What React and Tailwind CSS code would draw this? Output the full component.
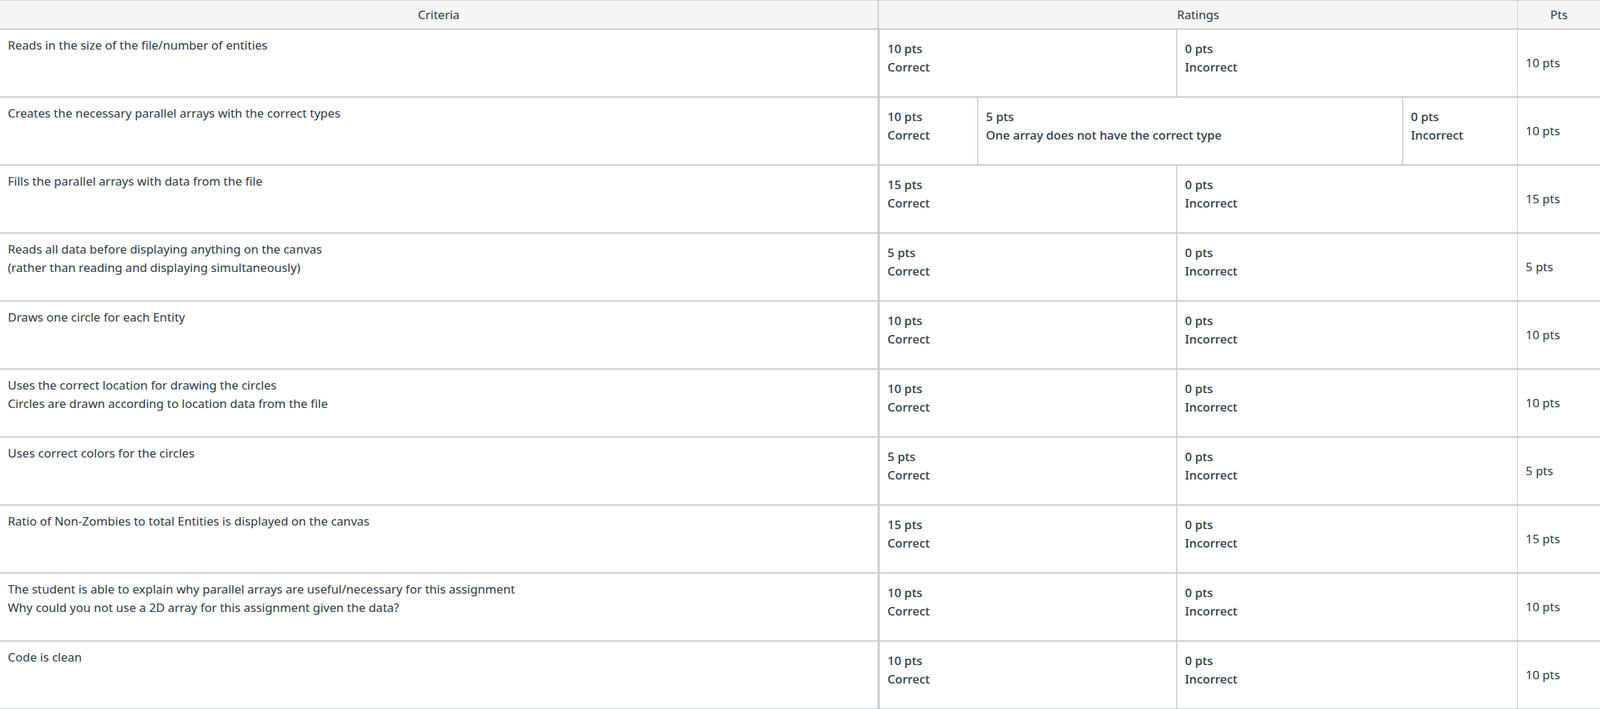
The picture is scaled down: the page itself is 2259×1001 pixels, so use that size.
const rows = [
  { c: ['Reads in the size of the file/number of entities'], r: [[10, 'Correct'], [0, 'Incorrect']], p: 10 },
  { c: ['Creates the necessary parallel arrays with the correct types'], r: [[10, 'Correct'], [5, 'One array does not have the correct type'], [0, 'Incorrect']], p: 10 },
  { c: ['Fills the parallel arrays with data from the file'], r: [[15, 'Correct'], [0, 'Incorrect']], p: 15 },
  { c: ['Reads all data before displaying anything on the canvas', '(rather than reading and displaying simultaneously)'], r: [[5, 'Correct'], [0, 'Incorrect']], p: 5 },
  { c: ['Draws one circle for each Entity'], r: [[10, 'Correct'], [0, 'Incorrect']], p: 10 },
  { c: ['Uses the correct location for drawing the circles', 'Circles are drawn according to location data from the file'], r: [[10, 'Correct'], [0, 'Incorrect']], p: 10 },
  { c: ['Uses correct colors for the circles'], r: [[5, 'Correct'], [0, 'Incorrect']], p: 5 },
  { c: ['Ratio of Non-Zombies to total Entities is displayed on the canvas'], r: [[15, 'Correct'], [0, 'Incorrect']], p: 15 },
  { c: ['The student is able to explain why parallel arrays are useful/necessary for this assignment', 'Why could you not use a 2D array for this assignment given the data?'], r: [[10, 'Correct'], [0, 'Incorrect']], p: 10 },
  { c: ['Code is clean'], r: [[10, 'Correct'], [0, 'Incorrect']], p: 10 },
];

function Rating({ pts, label, className }) {
  return (
    <div className={`pt-[14px] px-[11px] text-[17px] leading-[26px] font-medium text-[#2d3b45] ${className}`}>
      <div>{pts} pts</div>
      <div>{label}</div>
    </div>
  );
}

export default function App() {
  return (
    <div className="w-[2259px] h-[1001px] overflow-hidden bg-white font-['Lato','Liberation_Sans',sans-serif]">
      <div className="grid grid-cols-[1239px_903px_117px] border-t border-[#c7cdd1]">
        <div className="h-[41px] bg-[#f5f5f5] border-b-[2px] border-[#c7cdd1] flex items-center justify-center text-[17px] text-[#2d3b45]">Criteria</div>
        <div className="h-[41px] bg-[#f5f5f5] border-b-[2px] border-l-[2px] border-[#c7cdd1] flex items-center justify-center text-[17px] text-[#2d3b45]">Ratings</div>
        <div className="h-[41px] bg-[#f5f5f5] border-b-[2px] border-l border-[#c7cdd1] flex items-center justify-center text-[17px] text-[#2d3b45]">Pts</div>
        {rows.map((row, i) => (
          <div key={i} className="contents">
            <div className="h-[96px] border-b-[2px] border-[#c7cdd1] pt-[9px] px-[11px] text-[17px] leading-[26px] text-[#2d3b45]">
              {row.c.map((t) => <div key={t}>{t}</div>)}
            </div>
            <div className="h-[96px] border-b-[2px] border-l-[3px] border-[#c7cdd1] flex">
              {row.r.length === 2 ? (
                <>
                  <Rating pts={row.r[0][0]} label={row.r[0][1]} className="w-[420px] border-r border-[#b0b5b9]" />
                  <Rating pts={row.r[1][0]} label={row.r[1][1]} className="flex-1" />
                </>
              ) : (
                <>
                  <Rating pts={row.r[0][0]} label={row.r[0][1]} className="w-[139px] border-r border-[#b0b5b9]" />
                  <Rating pts={row.r[1][0]} label={row.r[1][1]} className="w-[600px] border-r border-[#b0b5b9]" />
                  <Rating pts={row.r[2][0]} label={row.r[2][1]} className="flex-1" />
                </>
              )}
            </div>
            <div className="h-[96px] border-b-[2px] border-l border-[#c7cdd1] flex items-center px-[11px] text-[17px] text-[#2d3b45]">
              {row.p} pts
            </div>
          </div>
        ))}
      </div>
    </div>
  );
}
